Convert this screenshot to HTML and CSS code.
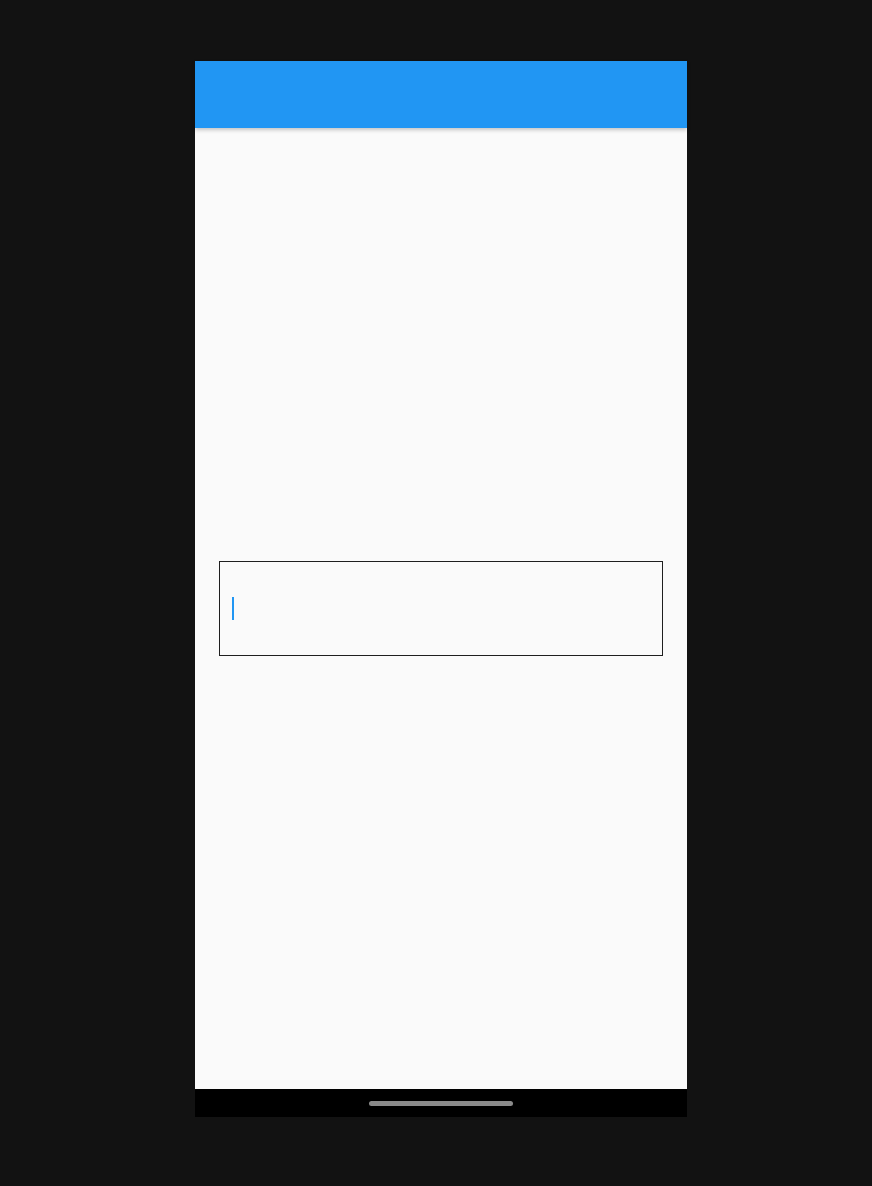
FILE: index.html
```html
<!DOCTYPE html>
<html lang="en">
<head>
<meta charset="utf-8">
<title>Text field</title>
<link rel="stylesheet" href="styles.css">
</head>
<body>
<div class="stage">
  <div class="phone">
    <header class="appbar"></header>
    <main class="content">
      <div class="field" role="textbox" aria-label="Text input">
        <span class="cursor"></span>
      </div>
    </main>
    <nav class="navbar"><span class="pill"></span></nav>
  </div>
</div>
</body>
</html>
```
FILE: styles.css
```css
html, body {
  margin: 0;
  padding: 0;
  background: #121212;
  font-family: Roboto, "Liberation Sans", sans-serif;
}
.stage {
  padding: 61px 0 0 195px;
}
.phone {
  width: 492px;
  display: flex;
  flex-direction: column;
}
.appbar {
  height: 67px;
  background: #2196f3;
  box-shadow: 0 2px 4px rgba(0, 0, 0, 0.22);
  position: relative;
  z-index: 1;
}
.content {
  height: 961px;
  background: #fafafa;
  display: flex;
  align-items: center;
  padding: 0 24px;
}
.field {
  flex: 1;
  height: 95px;
  box-sizing: border-box;
  border: 1px solid #1f1f1f;
  display: flex;
  align-items: center;
  padding-left: 12px;
}
.cursor {
  width: 2px;
  height: 23px;
  background: #2196f3;
}
.navbar {
  height: 28px;
  background: #000;
  display: flex;
  align-items: center;
  justify-content: center;
}
.pill {
  width: 144px;
  height: 5px;
  border-radius: 3px;
  background: #8a8a8a;
}
```
